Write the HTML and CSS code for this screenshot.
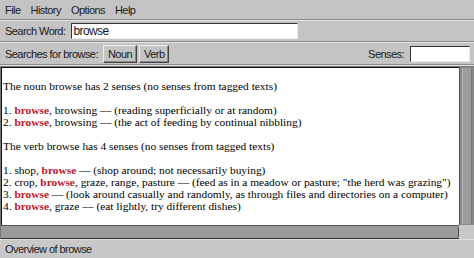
FILE: index.html
```
<!DOCTYPE html>
<html>
<head>
  <title>WordNet Browser</title>
  <meta charset="utf-8">
  <link rel="stylesheet" href="styles.css">
</head>
<body>
  <div class="menubar">
    <span>File</span>
    <span>History</span>
    <span>Options</span>
    <span>Help</span>
  </div>
  <div class="row search-row">
    <span class="label">Search Word:</span>
    <div class="entry word-entry">browse</div>
  </div>
  <div class="row pos-row">
    <span class="label">Searches for browse:</span>
    <button class="btn">Noun</button>
    <button class="btn">Verb</button>
    <span class="spacer"></span>
    <span class="label">Senses:</span>
    <div class="entry senses-entry"></div>
  </div>
  <div class="main">
    <div class="text-col">
      <div class="text">
        <p>&nbsp;</p>
        <p>The noun browse has 2 senses (no senses from tagged texts)</p>
        <p>&nbsp;</p>
        <p>1. <b>browse</b>, browsing –– (reading superficially or at random)</p>
        <p>2. <b>browse</b>, browsing –– (the act of feeding by continual nibbling)</p>
        <p>&nbsp;</p>
        <p>The verb browse has 4 senses (no senses from tagged texts)</p>
        <p>&nbsp;</p>
        <p>1. shop, <b>browse</b> –– (shop around; not necessarily buying)</p>
        <p>2. crop, <b>browse</b>, graze, range, pasture –– (feed as in a meadow or pasture; "the herd was grazing")</p>
        <p>3. <b>browse</b> –– (look around casually and randomly, as through files and directories on a computer)</p>
        <p>4. <b>browse</b>, graze –– (eat lightly, try different dishes)</p>
      </div>
      <div class="hscroll"><div class="hslider"></div></div>
    </div>
    <div class="vscroll-col">
      <div class="vscroll"><div class="vslider"></div></div>
      <div class="corner"></div>
    </div>
  </div>
  <div class="status">Overview of browse</div>
</body>
</html>
```
FILE: styles.css
```
body {
  margin: 0;
  width: 474px;
  height: 258px;
  background: #c4c4c4;
  font-family: "Liberation Sans", Arial, sans-serif;
  font-size: 11px;
  letter-spacing: -0.55px;
  color: #1a1a1a;
  display: flex;
  flex-direction: column;
  overflow: hidden;
}
.menubar {
  height: 19px;
  display: flex;
  align-items: center;
  gap: 10px;
  padding: 0 5px;
  border-bottom: 1px solid #8a8a8a;
  box-shadow: 0 1px 0 #e4e4e4;
}
.row {
  height: 20px;
  display: flex;
  align-items: center;
  padding: 0 4px 0 5px;
  border-bottom: 1px solid #8a8a8a;
  box-shadow: 0 1px 0 #e4e4e4;
}
.search-row {
  margin-top: 1px;
}
.pos-row {
  margin-top: 1px;
  height: 21px;
}
.label {
  margin-right: 6px;
}
.entry {
  height: 14px;
  background: #fff;
  border-top: 1px solid #333;
  border-left: 1px solid #333;
  border-right: 1px solid #eee;
  border-bottom: 1px solid #eee;
  line-height: 14px;
  padding-left: 1px;
  font-size: 12px;
  letter-spacing: -0.6px;
}
.word-entry {
  width: 224px;
}
.senses-entry {
  width: 57px;
}
.btn {
  font: inherit;
  color: inherit;
  letter-spacing: inherit;
  height: 18px;
  padding: 0 4px;
  margin: 0 3px 0 -1px;
  background: #c4c4c4;
  border-top: 1px solid #eee;
  border-left: 1px solid #eee;
  border-right: 1px solid #444;
  border-bottom: 1px solid #444;
  box-shadow: inset -1px -1px 0 #888;
}
.spacer {
  flex: 1;
}
.main {
  flex: 1;
  display: flex;
  margin-top: 1px;
  border-top: 1px solid #777;
  border-left: 1px solid #777;
}
.text-col {
  flex: 1;
  display: flex;
  flex-direction: column;
}
.text {
  flex: 1;
  background: #fff;
  border-top: 1px solid #111;
  border-left: 1px solid #111;
  padding-left: 1px;
  font-family: "Liberation Serif", "Times New Roman", serif;
  font-size: 11.4px;
  letter-spacing: 0;
  line-height: 12px;
  color: #000;
  overflow: hidden;
}
.text p {
  margin: 0;
  white-space: nowrap;
}
.text b {
  color: #c01530;
}
.hscroll {
  height: 12px;
  background: #999;
  border-top: 1px solid #555;
  border-bottom: 1px solid #333;
}
.hslider {
  height: 10px;
  margin: 1px 0 0 1px;
  background: #9a9a9a;
  border-right: 1px solid #444;
  border-radius: 0 2px 2px 0;
}
.vscroll-col {
  width: 15px;
  display: flex;
  flex-direction: column;
}
.vscroll {
  flex: 1;
  background: #888;
  border-left: 1px solid #555;
  padding: 1px 2px;
}
.vslider {
  height: 100%;
  background: #9c9c9c;
  border-left: 1px solid #b8b8b8;
  border-right: 1px solid #777;
}
.corner {
  height: 14px;
  background: #c8c8c8;
}
.status {
  height: 18px;
  line-height: 18px;
  padding-left: 5px;
  background: #c8c8c8;
  border-top: 1px solid #e0e0e0;
}
```
